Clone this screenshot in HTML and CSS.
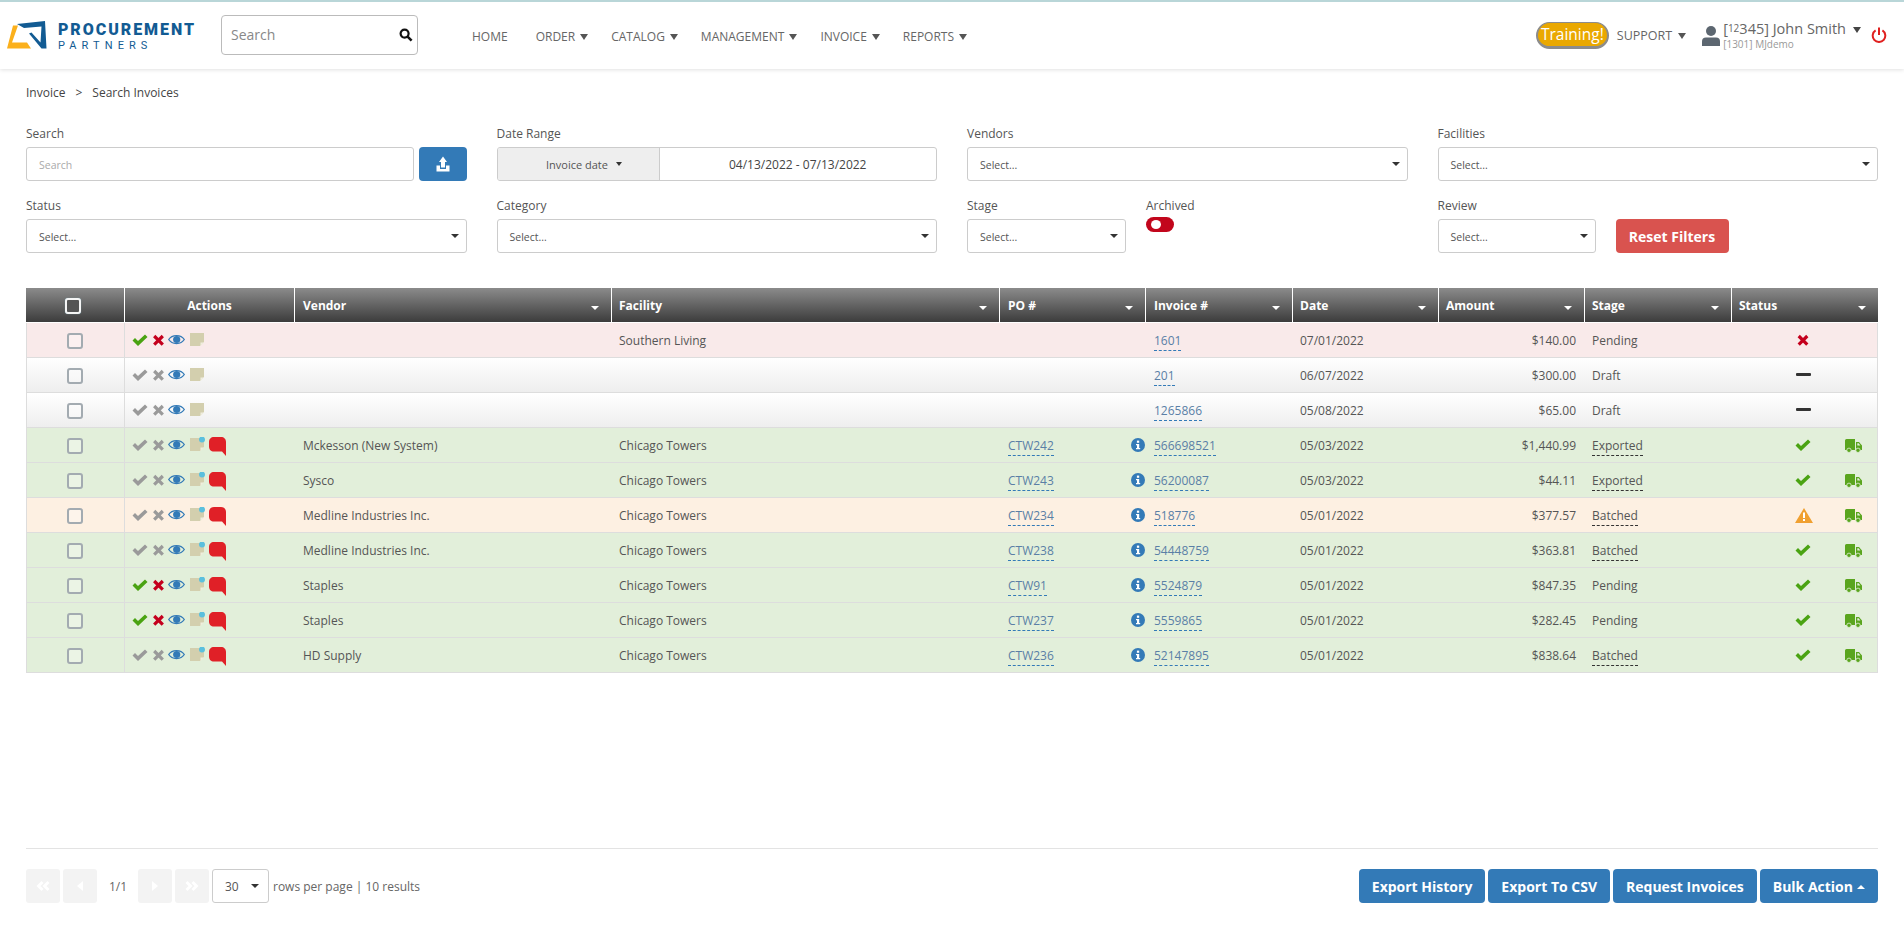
FILE: index.html
```html
<!DOCTYPE html>
<html lang="en">
<head>
<meta charset="utf-8">
<title>Search Invoices</title>
<link rel="stylesheet" href="styles.css">
</head>
<body>
<svg class="defs" aria-hidden="true">
  <symbol id="i-check" viewBox="0 0 16 20"><path d="M0.5 8.5 L3 6 L6 9 L13 2.5 L15.5 5 L6 14 Z"/></symbol>
  <symbol id="i-x" viewBox="0 0 11 20"><path d="M1.2 4 L9.8 12.6 M9.8 4 L1.2 12.6" fill="none" stroke="currentColor" stroke-width="3.2"/></symbol>
  <symbol id="i-eye" viewBox="0 0 17 20"><path d="M0.7 7.5 C4 2.2 13 2.2 16.3 7.5 C13 12.8 4 12.8 0.7 7.5 Z" fill="none" stroke="#337ab7" stroke-width="1.3"/><circle cx="8.7" cy="7.5" r="3.6" fill="#337ab7"/></symbol>
  <symbol id="i-note" viewBox="0 0 19 20"><path d="M0 1 H14 V10 L10 14 H0 Z" fill="#d3cfae"/><path d="M10.5 14 V10.5 H14 Z" fill="#f0eedf"/></symbol>
  <symbol id="i-note-dot" viewBox="0 0 19 20"><path d="M0 1 H14 V10 L10 14 H0 Z" fill="#d3cfae"/><path d="M10.5 14 V10.5 H14 Z" fill="#f0eedf"/><circle cx="12" cy="2.6" r="3" fill="#5bc0de"/></symbol>
  <symbol id="i-bubble" viewBox="0 0 17 20"><path d="M5 0 H12 C15 0 17 2 17 5 V19 L13 14.5 H5 C2 14.5 0 12.5 0 9.5 V5 C0 2 2 0 5 0 Z" fill="#e02027"/></symbol>
  <symbol id="i-info" viewBox="0 0 14 14"><circle cx="7" cy="7" r="7" fill="#337ab7"/><rect x="5.9" y="2.6" width="2.3" height="2.2" fill="#fff"/><path d="M5 6 H8.2 V10 H9.2 V11.3 H5 V10 H6 V7.3 H5 Z" fill="#fff"/></symbol>
  <symbol id="i-truck" viewBox="0 0 17 14"><path d="M0 1.5 Q0 0 1.5 0 H10 V11 H0 Z M11 3 H14 L17 6.5 V11 H11 Z" fill="#5aa51e"/><path d="M12.3 4.2 H13.6 L15.4 6.5 H12.3 Z" fill="#e2efda"/><circle cx="4" cy="11.3" r="2.2" fill="#5aa51e" stroke="#e2efda" stroke-width=".8"/><circle cx="13" cy="11.3" r="2.2" fill="#5aa51e" stroke="#e2efda" stroke-width=".8"/></symbol>
  <symbol id="i-warn" viewBox="0 0 18 15"><path d="M9 0 L18 15 H0 Z" fill="#f0a030"/><rect x="8" y="4.5" width="2" height="5.5" fill="#fff"/><rect x="8" y="11" width="2" height="2" fill="#fff"/></symbol>
  <symbol id="i-dbl-l" viewBox="0 0 14 10"><path d="M6.5 1 L2.5 5 L6.5 9 M12.5 1 L8.5 5 L12.5 9" fill="none" stroke="#fff" stroke-width="2.8"/></symbol>
  <symbol id="i-dbl-r" viewBox="0 0 14 10"><path d="M1.5 1 L5.5 5 L1.5 9 M7.5 1 L11.5 5 L7.5 9" fill="none" stroke="#fff" stroke-width="2.8"/></symbol>
</svg>

<header class="topbar">
  <a class="logo">
    <svg class="logo-mark" viewBox="0 0 42 30" width="42" height="30">
      <path d="M10 4 L38 1 L39.5 28.5 L34.5 28.5 L22 13.5 L24.5 12.5 L33.5 22.5 L34.5 6.5 L17 8 Z" fill="#125b93"/>
      <path d="M6 5.5 L11 5.5 L5 22.5 L20 22.5 L24 28.5 L0 28.5 Z" fill="#fbb01c"/>
    </svg>
    <span class="logo-text"><b>PROCUREMENT</b><i>PARTNERS</i></span>
  </a>
  <div class="top-search">
    <span>Search</span>
    <svg viewBox="0 0 14 14" width="14" height="14"><circle cx="5.6" cy="5.6" r="4" fill="none" stroke="#111" stroke-width="2.2"/><path d="M8.6 8.6 L12.6 12.6" stroke="#111" stroke-width="2.6"/></svg>
  </div>
  <nav class="nav">
    <a class="nav-home">HOME</a>
    <a>ORDER<u class="tri"></u></a>
    <a>CATALOG<u class="tri"></u></a>
    <a>MANAGEMENT<u class="tri"></u></a>
    <a>INVOICE<u class="tri"></u></a>
    <a>REPORTS<u class="tri"></u></a>
  </nav>
  <div class="top-right">
    <span class="training">Training!</span>
    <a class="support">SUPPORT<u class="tri"></u></a>
    <svg class="user-icon" viewBox="0 0 18 20" width="18" height="20"><circle cx="9" cy="5" r="5" fill="#5c6670"/><path d="M0 20 V15.5 Q0 11.5 4 11.5 H14 Q18 11.5 18 15.5 V20 Z" fill="#5c6670"/></svg>
    <div class="user">
      <div class="user-name">[<small>12</small>345] John Smith</div>
      <div class="user-sub">[1301] MJdemo</div>
    </div>
    <u class="tri user-tri"></u>
    <svg class="power" viewBox="0 0 16 16" width="16" height="16"><path d="M4.6 3.4 A6.3 6.3 0 1 0 11.4 3.4" fill="none" stroke="#e0201f" stroke-width="2"/><path d="M8 0.5 V8" stroke="#e0201f" stroke-width="2"/></svg>
  </div>
</header>

<main class="page">
  <div class="crumbs"><span>Invoice</span><span class="crumb-sep">&gt;</span><span>Search Invoices</span></div>

  <section class="filters">
    <div class="field">
      <label>Search</label>
      <div class="split">
        <div class="box grow placeholder">Search</div>
        <button class="upload"><svg viewBox="0 0 16 16" width="16" height="16"><path d="M8 0.5 L12 6 H10 V11.5 H6 V6 H4 Z" fill="#fff"/><path d="M1.5 9.5 H5 V13 H11 V9.5 H14.5 V15.5 H1.5 Z" fill="#fff"/></svg></button>
      </div>
    </div>
    <div class="field">
      <label>Date Range</label>
      <div class="date">
        <div class="date-type">Invoice date<u class="tri tiny"></u></div>
        <div class="date-val">04/13/2022 - 07/13/2022</div>
      </div>
    </div>
    <div class="field">
      <label>Vendors</label>
      <div class="box select">Select...<u class="tri tiny"></u></div>
    </div>
    <div class="field">
      <label>Facilities</label>
      <div class="box select">Select...<u class="tri tiny"></u></div>
    </div>
    <div class="field">
      <label>Status</label>
      <div class="box select">Select...<u class="tri tiny"></u></div>
    </div>
    <div class="field">
      <label>Category</label>
      <div class="box select">Select...<u class="tri tiny"></u></div>
    </div>
    <div class="field pair">
      <div class="field stage">
        <label>Stage</label>
        <div class="box select">Select...<u class="tri tiny"></u></div>
      </div>
      <div class="field">
        <label>Archived</label>
        <span class="toggle"></span>
      </div>
    </div>
    <div class="field pair review">
      <div class="field stage">
        <label>Review</label>
        <div class="box select">Select...<u class="tri tiny"></u></div>
      </div>
      <button class="reset">Reset Filters</button>
    </div>
  </section>

  <table class="grid">
    <colgroup>
      <col class="c-check"><col class="c-actions"><col class="c-vendor"><col class="c-facility"><col class="c-po"><col class="c-inv"><col class="c-date"><col class="c-amt"><col class="c-stage"><col class="c-status">
    </colgroup>
    <thead>
      <tr>
        <th class="th-check"><span class="cb cb-head"></span></th>
        <th class="th-center">Actions</th>
        <th><div class="th-in">Vendor<u class="caret"></u></div></th>
        <th><div class="th-in">Facility<u class="caret"></u></div></th>
        <th><div class="th-in">PO #<u class="caret"></u></div></th>
        <th><div class="th-in">Invoice #<u class="caret"></u></div></th>
        <th><div class="th-in">Date<u class="caret"></u></div></th>
        <th><div class="th-in">Amount<u class="caret"></u></div></th>
        <th><div class="th-in">Stage<u class="caret"></u></div></th>
        <th><div class="th-in">Status<u class="caret"></u></div></th>
      </tr>
    </thead>
    <tbody>
      <tr class="r-red">
        <td class="td-check"><span class="cb"></span></td>
        <td class="td-line"><div class="acts"><svg class="a-check on"><use href="#i-check"/></svg><svg class="a-x on"><use href="#i-x"/></svg><svg class="a-eye"><use href="#i-eye"/></svg><svg class="a-note"><use href="#i-note"/></svg></div></td>
        <td></td><td>Southern Living</td><td></td>
        <td class="td-inv"><a class="lnk">1601</a></td>
        <td>07/01/2022</td><td class="amt">$140.00</td><td>Pending</td>
        <td><div class="st"><svg class="s-x"><use href="#i-x"/></svg></div></td>
      </tr>
      <tr class="r-grey">
        <td class="td-check"><span class="cb"></span></td>
        <td class="td-line"><div class="acts"><svg class="a-check"><use href="#i-check"/></svg><svg class="a-x"><use href="#i-x"/></svg><svg class="a-eye"><use href="#i-eye"/></svg><svg class="a-note"><use href="#i-note"/></svg></div></td>
        <td></td><td></td><td></td>
        <td class="td-inv"><a class="lnk">201</a></td>
        <td>06/07/2022</td><td class="amt">$300.00</td><td>Draft</td>
        <td><div class="st"><span class="dash"></span></div></td>
      </tr>
      <tr class="r-grey">
        <td class="td-check"><span class="cb"></span></td>
        <td class="td-line"><div class="acts"><svg class="a-check"><use href="#i-check"/></svg><svg class="a-x"><use href="#i-x"/></svg><svg class="a-eye"><use href="#i-eye"/></svg><svg class="a-note"><use href="#i-note"/></svg></div></td>
        <td></td><td></td><td></td>
        <td class="td-inv"><a class="lnk">1265866</a></td>
        <td>05/08/2022</td><td class="amt">$65.00</td><td>Draft</td>
        <td><div class="st"><span class="dash"></span></div></td>
      </tr>
      <tr class="r-green">
        <td class="td-check"><span class="cb"></span></td>
        <td class="td-line"><div class="acts"><svg class="a-check"><use href="#i-check"/></svg><svg class="a-x"><use href="#i-x"/></svg><svg class="a-eye"><use href="#i-eye"/></svg><svg class="a-note"><use href="#i-note-dot"/></svg><svg class="a-bub"><use href="#i-bubble"/></svg></div></td>
        <td>Mckesson (New System)</td><td>Chicago Towers</td>
        <td class="td-po"><a class="lnk">CTW242</a><svg class="info"><use href="#i-info"/></svg></td>
        <td class="td-inv"><a class="lnk">566698521</a></td>
        <td>05/03/2022</td><td class="amt">$1,440.99</td><td><span class="dashed">Exported</span></td>
        <td><div class="st"><svg class="s-ok"><use href="#i-check"/></svg><svg class="truck"><use href="#i-truck"/></svg></div></td>
      </tr>
      <tr class="r-green">
        <td class="td-check"><span class="cb"></span></td>
        <td class="td-line"><div class="acts"><svg class="a-check"><use href="#i-check"/></svg><svg class="a-x"><use href="#i-x"/></svg><svg class="a-eye"><use href="#i-eye"/></svg><svg class="a-note"><use href="#i-note-dot"/></svg><svg class="a-bub"><use href="#i-bubble"/></svg></div></td>
        <td>Sysco</td><td>Chicago Towers</td>
        <td class="td-po"><a class="lnk">CTW243</a><svg class="info"><use href="#i-info"/></svg></td>
        <td class="td-inv"><a class="lnk">56200087</a></td>
        <td>05/03/2022</td><td class="amt">$44.11</td><td><span class="dashed">Exported</span></td>
        <td><div class="st"><svg class="s-ok"><use href="#i-check"/></svg><svg class="truck"><use href="#i-truck"/></svg></div></td>
      </tr>
      <tr class="r-orange">
        <td class="td-check"><span class="cb"></span></td>
        <td class="td-line"><div class="acts"><svg class="a-check"><use href="#i-check"/></svg><svg class="a-x"><use href="#i-x"/></svg><svg class="a-eye"><use href="#i-eye"/></svg><svg class="a-note"><use href="#i-note-dot"/></svg><svg class="a-bub"><use href="#i-bubble"/></svg></div></td>
        <td>Medline Industries Inc.</td><td>Chicago Towers</td>
        <td class="td-po"><a class="lnk">CTW234</a><svg class="info"><use href="#i-info"/></svg></td>
        <td class="td-inv"><a class="lnk">518776</a></td>
        <td>05/01/2022</td><td class="amt">$377.57</td><td><span class="dashed">Batched</span></td>
        <td><div class="st"><svg class="s-warn"><use href="#i-warn"/></svg><svg class="truck"><use href="#i-truck"/></svg></div></td>
      </tr>
      <tr class="r-green">
        <td class="td-check"><span class="cb"></span></td>
        <td class="td-line"><div class="acts"><svg class="a-check"><use href="#i-check"/></svg><svg class="a-x"><use href="#i-x"/></svg><svg class="a-eye"><use href="#i-eye"/></svg><svg class="a-note"><use href="#i-note-dot"/></svg><svg class="a-bub"><use href="#i-bubble"/></svg></div></td>
        <td>Medline Industries Inc.</td><td>Chicago Towers</td>
        <td class="td-po"><a class="lnk">CTW238</a><svg class="info"><use href="#i-info"/></svg></td>
        <td class="td-inv"><a class="lnk">54448759</a></td>
        <td>05/01/2022</td><td class="amt">$363.81</td><td><span class="dashed">Batched</span></td>
        <td><div class="st"><svg class="s-ok"><use href="#i-check"/></svg><svg class="truck"><use href="#i-truck"/></svg></div></td>
      </tr>
      <tr class="r-green">
        <td class="td-check"><span class="cb"></span></td>
        <td class="td-line"><div class="acts"><svg class="a-check on"><use href="#i-check"/></svg><svg class="a-x on"><use href="#i-x"/></svg><svg class="a-eye"><use href="#i-eye"/></svg><svg class="a-note"><use href="#i-note-dot"/></svg><svg class="a-bub"><use href="#i-bubble"/></svg></div></td>
        <td>Staples</td><td>Chicago Towers</td>
        <td class="td-po"><a class="lnk">CTW91</a><svg class="info"><use href="#i-info"/></svg></td>
        <td class="td-inv"><a class="lnk">5524879</a></td>
        <td>05/01/2022</td><td class="amt">$847.35</td><td>Pending</td>
        <td><div class="st"><svg class="s-ok"><use href="#i-check"/></svg><svg class="truck"><use href="#i-truck"/></svg></div></td>
      </tr>
      <tr class="r-green">
        <td class="td-check"><span class="cb"></span></td>
        <td class="td-line"><div class="acts"><svg class="a-check on"><use href="#i-check"/></svg><svg class="a-x on"><use href="#i-x"/></svg><svg class="a-eye"><use href="#i-eye"/></svg><svg class="a-note"><use href="#i-note-dot"/></svg><svg class="a-bub"><use href="#i-bubble"/></svg></div></td>
        <td>Staples</td><td>Chicago Towers</td>
        <td class="td-po"><a class="lnk">CTW237</a><svg class="info"><use href="#i-info"/></svg></td>
        <td class="td-inv"><a class="lnk">5559865</a></td>
        <td>05/01/2022</td><td class="amt">$282.45</td><td>Pending</td>
        <td><div class="st"><svg class="s-ok"><use href="#i-check"/></svg><svg class="truck"><use href="#i-truck"/></svg></div></td>
      </tr>
      <tr class="r-green">
        <td class="td-check"><span class="cb"></span></td>
        <td class="td-line"><div class="acts"><svg class="a-check"><use href="#i-check"/></svg><svg class="a-x"><use href="#i-x"/></svg><svg class="a-eye"><use href="#i-eye"/></svg><svg class="a-note"><use href="#i-note-dot"/></svg><svg class="a-bub"><use href="#i-bubble"/></svg></div></td>
        <td>HD Supply</td><td>Chicago Towers</td>
        <td class="td-po"><a class="lnk">CTW236</a><svg class="info"><use href="#i-info"/></svg></td>
        <td class="td-inv"><a class="lnk">52147895</a></td>
        <td>05/01/2022</td><td class="amt">$838.64</td><td><span class="dashed">Batched</span></td>
        <td><div class="st"><svg class="s-ok"><use href="#i-check"/></svg><svg class="truck"><use href="#i-truck"/></svg></div></td>
      </tr>
    </tbody>
  </table>

  <footer class="foot">
    <div class="pager">
      <span class="pg"><svg class="dbl"><use href="#i-dbl-l"/></svg></span>
      <span class="pg"><u class="arrow-l"></u></span>
      <span class="pg-text">1/1</span>
      <span class="pg"><u class="arrow-r"></u></span>
      <span class="pg"><svg class="dbl"><use href="#i-dbl-r"/></svg></span>
      <div class="per">30<u class="tri tiny"></u></div>
      <span class="results">rows per page | 10 results</span>
    </div>
    <div class="foot-btns">
      <button class="btn">Export History</button>
      <button class="btn">Export To CSV</button>
      <button class="btn">Request Invoices</button>
      <button class="btn">Bulk Action<u class="up"></u></button>
    </div>
  </footer>
</main>
</body>
</html>
```
FILE: styles.css
```css
* { box-sizing: border-box; }
html, body { margin: 0; height: 100%; }
body {
  display: flex;
  flex-direction: column;
  height: 947px;
  overflow: hidden;
  background: #fff;
  font-family: "Open Sans", "Liberation Sans", sans-serif;
  font-size: 12px;
  color: #555;
}
u { text-decoration: none; }
button { font-family: inherit; cursor: pointer; }
.defs { width: 0; height: 0; display: block; }

/* top bar */
.topbar {
  flex: none;
  height: 69px;
  display: flex;
  align-items: center;
  border-top: 2px solid #b9d6d8;
  box-shadow: 0 1px 4px rgba(0, 0, 0, .12);
  padding: 0 17px 0 7px;
}
.logo { display: flex; align-items: flex-start; width: 214px; }
.logo-mark { flex: none; margin-top: 1px; }
.logo-text { margin-left: 9px; display: flex; flex-direction: column; color: #125b93; font-family: Roboto, "Open Sans", sans-serif; }
.logo-text b { font-size: 16px; line-height: 19px; font-weight: 900; letter-spacing: 1.95px; margin-top: 1px; white-space: nowrap; }
.logo-text i { font-size: 11px; line-height: 13px; font-style: normal; letter-spacing: 5.1px; }

.top-search {
  width: 197px;
  height: 40px;
  margin-top: -2px;
  border: 1px solid #bbb;
  border-radius: 4px;
  display: flex;
  align-items: center;
  justify-content: space-between;
  padding: 0 4px 0 9px;
  font-size: 14px;
  color: #888;
}
.nav { display: flex; align-items: center; margin-left: 54px; margin-top: 2px; color: #666; }
.nav a { display: flex; align-items: center; margin-right: 23px; font-size: 12px; white-space: nowrap; }
.nav .nav-home { margin-right: 28px; }
.tri {
  display: inline-block;
  width: 0; height: 0;
  margin-left: 5px;
  border-left: 4px solid transparent;
  border-right: 4px solid transparent;
  border-top: 6px solid #555;
}
.tri.tiny { border-left-width: 4px; border-right-width: 4px; border-top-width: 4px; border-top-color: #333; }

.top-right { margin-left: auto; display: flex; align-items: center; }
.training {
  width: 73px;
  height: 27px;
  border: 2px solid #8c8c8c;
  border-top-width: 1px;
  border-bottom-width: 3px;
  border-radius: 14px;
  background: #eaa800;
  color: #fff;
  font-size: 15.5px;
  line-height: 22px;
  text-align: center;
}
.support { display: flex; align-items: center; margin-left: 8px; color: #666; font-size: 12.5px; }
.support .tri { margin-left: 6px; }
.user-icon { margin-left: 16px; }
.user { margin-left: 3px; color: #666; }
.user-name { font-size: 14.5px; line-height: 18px; margin-top: -2px; }
.user-name small { font-size: 10px; vertical-align: 2px; }
.user-sub { font-size: 10px; line-height: 12px; color: #999; }
.user-tri { margin: -11px 0 0 7px; border-top-color: #444; }
.power { margin-left: 10px; margin-top: -1px; }

/* page */
.page {
  flex: 1;
  min-height: 0;
  display: flex;
  flex-direction: column;
  padding: 0 26px;
}
.crumbs { margin-top: 15px; line-height: 18px; display: flex; color: #444; }
.crumb-sep { margin: 0 10px; }

.filters {
  margin-top: 23px;
  display: grid;
  grid-template-columns: repeat(4, 1fr);
  column-gap: 30px;
  row-gap: 0;
  align-items: start;
}
.field { display: flex; flex-direction: column; min-width: 0; }
.field label { font-size: 12px; line-height: 18px; color: #555; height: 22px; }
.filters > .field { height: 72px; }
.split { display: flex; gap: 5px; }
.box {
  height: 34px;
  border: 1px solid #ccc;
  border-radius: 3px;
  background: #fff;
  display: flex;
  align-items: center;
  padding: 2px 12px 0;
  font-size: 10.5px;
  color: #555;
}
.grow { flex: 1; }
.placeholder { color: #aaa; }
.select { justify-content: space-between; padding-right: 7px; }
.select .tri { margin-top: -2px; }
.upload {
  width: 48px;
  height: 34px;
  border: 0;
  border-radius: 4px;
  background: #337ab7;
  display: flex;
  align-items: center;
  justify-content: center;
  padding: 0;
}
.date {
  display: flex;
  height: 34px;
  border: 1px solid #ccc;
  border-radius: 3px;
  overflow: hidden;
}
.date-type {
  width: 162px;
  padding-left: 12px;
  background: #eee;
  border-right: 1px solid #ccc;
  display: flex;
  align-items: center;
  justify-content: center;
  font-size: 11px;
}
.date-type .tri { margin-left: 8px; border-left-width: 3px; border-right-width: 3px; }
.date-val { flex: 1; display: flex; align-items: center; justify-content: center; color: #444; }
.pair { flex-direction: row; }
.stage { width: 159px; flex: none; }
.review .stage { width: 158px; }
.pair .stage + .field { margin-left: 20px; }
.toggle {
  display: block;
  width: 28px;
  height: 15px;
  margin-top: -2px;
  border-radius: 8px;
  background: #c2061c;
  position: relative;
}
.toggle::after {
  content: "";
  position: absolute;
  left: 5px;
  top: 3px;
  width: 10px;
  height: 9px;
  border-radius: 50%;
  background: #fff;
}
.reset {
  width: 113px;
  height: 34px;
  margin: 22px 0 0 20px;
  border: 0;
  border-radius: 4px;
  background: #d9534f;
  color: #fff;
  font-size: 14px;
  font-weight: 700;
  padding: 0;
}

/* table */
.grid {
  margin-top: 19px;
  width: 100%;
  table-layout: fixed;
  border-collapse: separate;
  border-spacing: 0;
  font-size: 12px;
}
.c-check { width: 98px; }
.c-actions { width: 170px; }
.c-vendor { width: 317px; }
.c-facility { width: 388px; }
.c-po { width: 146px; }
.c-inv { width: 147px; }
.c-date { width: 146px; }
.c-amt { width: 146px; }
.c-stage { width: 147px; }
.c-status { width: 147px; }
.grid th {
  height: 35px;
  padding: 0 0 0 7px;
  border-bottom: 1px solid #fff;
  border-left: 1px solid #fff;
  background: linear-gradient(#8b8b8b, #3c3c3c);
  background-clip: padding-box;
  color: #fff;
  font-size: 12px;
  font-weight: 700;
  text-align: left;
  white-space: nowrap;
}
.grid th:first-child { border-left: 0; }
.grid th:nth-child(3),
.grid th:nth-child(5),
.grid th:nth-child(6) { padding-left: 8px; }
.th-in { display: flex; align-items: center; justify-content: space-between; padding-right: 12px; }
.caret {
  width: 0; height: 0;
  margin-top: 6px;
  border-left: 4px solid transparent;
  border-right: 4px solid transparent;
  border-top: 4px solid #fff;
}
.grid .th-center { text-align: center; padding: 0; }
.grid .th-check { padding: 0 4px 0 0; text-align: center; }
.cb {
  display: inline-block;
  width: 16px;
  height: 16px;
  border: 2px solid #a3abb1;
  border-radius: 3px;
  background: rgba(255, 255, 255, .3);
  vertical-align: middle;
}
.cb-head { background: #555; border-color: #f5f5f5; box-shadow: 0 0 1px #7ab; }
.grid td {
  height: 35px;
  padding: 0 8px;
  border-bottom: 1px solid #ddd;
  white-space: nowrap;
  color: #555;
}
.grid td:nth-child(3) { padding-left: 9px; }
.grid td:first-child { border-left: 1px solid #ddd; padding: 0 1px 0 0; text-align: center; }
.grid td:last-child { border-right: 1px solid #ddd; }
.grid .td-line { border-left: 1px solid #ddd; padding: 0 0 0 7px; }
.r-red td { background: #f9eaea; }
.r-grey td { background: linear-gradient(#fff, #eee); }
.r-green td { background: #e2efda; }
.r-orange td { background: #fdf0e2; }
.acts { display: flex; height: 20px; margin-top: 3px; }
.acts svg { height: 20px; display: block; flex: none; color: #9a9a9a; fill: #9a9a9a; }
.a-check { width: 16px; margin-right: 5px; }
.a-x { width: 11px; margin-right: 4px; }
.a-eye { width: 17px; margin-right: 5px; }
.a-note { width: 19px; }
.a-bub { width: 17px; }
.acts .a-check.on { fill: #4aa312; }
.acts .a-x.on { color: #c4001d; }
.lnk {
  color: #5a7fa6;
  border-bottom: 1px dashed #337ab7;
  padding-bottom: 1px;
}
.dashed { border-bottom: 1px dashed #333; padding-bottom: 1px; }
.amt { text-align: right; }
.grid .td-po { position: relative; padding-left: 9px; }
.info { position: absolute; right: 0; top: 10px; width: 14px; height: 14px; }
.grid .td-inv { padding-left: 9px; }
.st { position: relative; height: 20px; margin-top: 1px; }
.s-x { position: absolute; left: 58px; top: 1px; width: 12px; height: 20px; color: #c4001d; }
.s-ok { position: absolute; left: 56px; top: 1px; width: 16px; height: 20px; fill: #4aa312; }
.s-warn { position: absolute; left: 56px; top: 2px; width: 18px; height: 15px; }
.dash {
  position: absolute;
  left: 57px;
  top: 7px;
  width: 15px;
  height: 3px;
  border-radius: 1px;
  background: #333;
}
.truck { position: absolute; left: 106px; top: 3px; width: 17px; height: 14px; }

/* footer */
.foot {
  margin-top: auto;
  height: 99px;
  border-top: 1px solid #e3e3e3;
  padding-top: 20px;
  display: flex;
  justify-content: space-between;
  align-items: flex-start;
  flex: none;
}
.pager { display: flex; align-items: center; height: 34px; }
.pg {
  width: 34px;
  height: 34px;
  margin-right: 3px;
  border-radius: 3px;
  background: #f3f3f3;
  display: flex;
  align-items: center;
  justify-content: center;
}
.dbl { width: 14px; height: 10px; display: block; }
.arrow-l, .arrow-r { width: 0; height: 0; border-top: 5px solid transparent; border-bottom: 5px solid transparent; }
.arrow-l { border-right: 6px solid #fff; }
.arrow-r { border-left: 6px solid #fff; }
.pg-text { width: 36px; margin: 0 2px 0 0; text-align: center; color: #666; }
.per {
  width: 57px;
  height: 34px;
  border: 1px solid #ccc;
  border-radius: 3px;
  display: flex;
  align-items: center;
  justify-content: space-between;
  padding: 0 9px 0 12px;
  color: #555;
}
.results { margin-left: 4px; color: #666; }
.foot-btns { display: flex; gap: 3px; }
.btn {
  height: 34px;
  padding: 0 13px;
  border: 0;
  border-radius: 4px;
  background: #337ab7;
  color: #fff;
  font-size: 14px;
  font-weight: 700;
  white-space: nowrap;
}
.up {
  display: inline-block;
  width: 0; height: 0;
  margin-left: 4px;
  vertical-align: 3px;
  border-left: 4px solid transparent;
  border-right: 4px solid transparent;
  border-bottom: 4px solid #fff;
}
```
